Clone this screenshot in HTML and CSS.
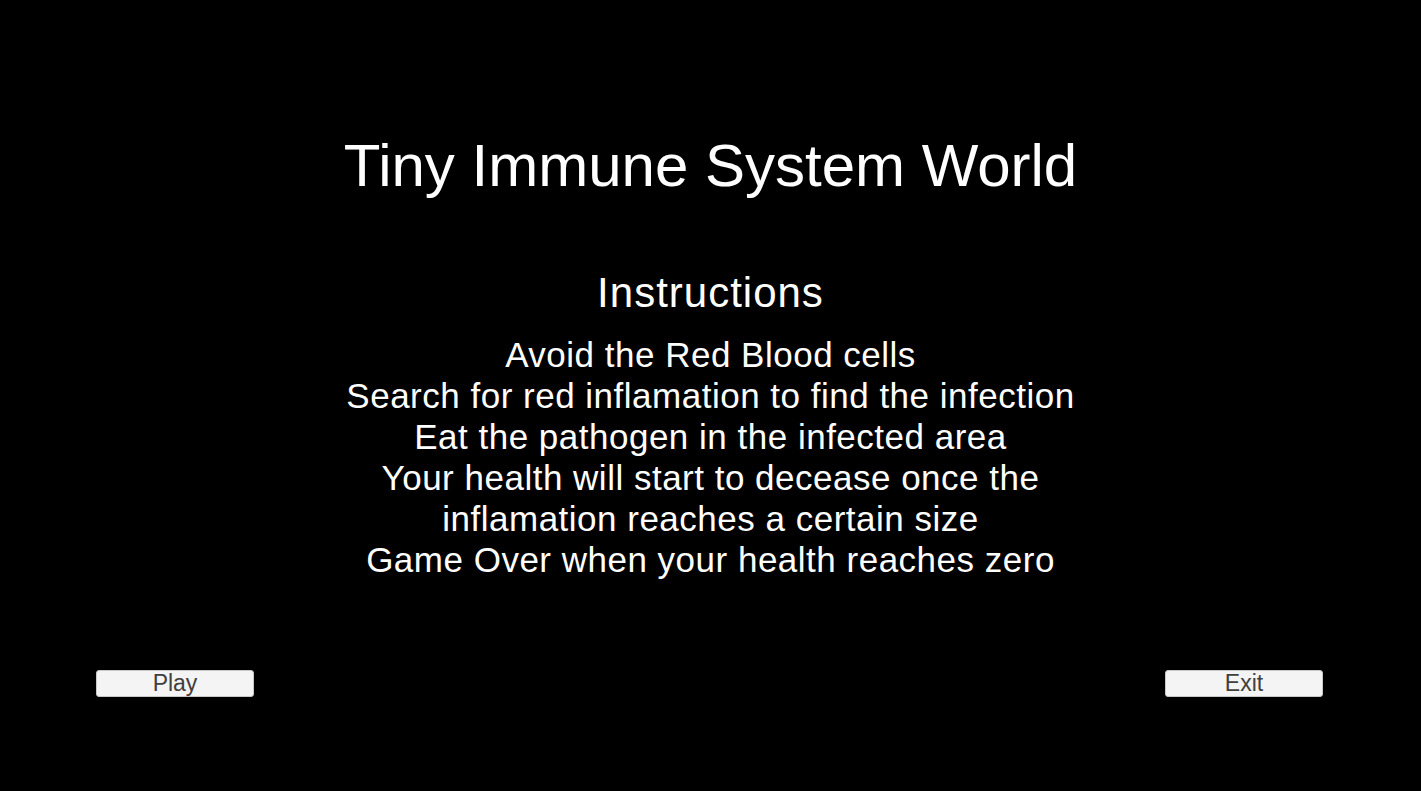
FILE: index.html
```html
<!DOCTYPE html>
<html lang="en">
<head>
  <meta charset="UTF-8" />
  <meta name="viewport" content="width=device-width, initial-scale=1.0"/>
  <title>Tiny Immune System World</title>
  <link rel="stylesheet" href="styles.css">
</head>
<body>
  <div class="menu">
    <h1 class="title">Tiny Immune System World</h1>

    <div class="instructions">
      <h2>Instructions</h2>
      <p class="rules">
        Avoid the Red Blood cells<br />
        Search for red inflamation to find the infection<br />
        Eat the pathogen in the infected area<br />
        Your health will start to decease once the<br />
        inflamation reaches a certain size<br />
        Game Over when your health reaches zero
      </p>
    </div>

    <div class="buttons">
      <button class="menu-button">Play</button>
      <button class="menu-button">Exit</button>
    </div>
  </div>
</body>
</html>
```

FILE: styles.css
```css
* {
  margin: 0;
  padding: 0;
  box-sizing: border-box;
}

body {
  background: #000;
  color: #fff;
  font-family: 'Liberation Sans', Arial, sans-serif;
  width: 100%;
  min-height: 100vh;
}

.menu {
  display: flex;
  flex-direction: column;
  align-items: center;
  padding-top: 133px;
}

.title {
  font-size: 60px;
  font-weight: normal;
  line-height: 66px;
}

.instructions {
  margin-top: 69px;
  text-align: center;
}

.instructions h2 {
  font-size: 42px;
  font-weight: normal;
  line-height: 50px;
  letter-spacing: 1px;
}

.rules {
  margin-top: 16px;
  font-size: 35px;
  line-height: 41px;
  letter-spacing: 0.5px;
}

.buttons {
  width: 100%;
  display: flex;
  justify-content: space-between;
  padding: 0 98px 0 96px;
  margin-top: 90px;
}

.menu-button {
  width: 158px;
  height: 27px;
  background: #f4f4f4;
  border: 1px solid #c8c8c8;
  border-radius: 3px;
  color: #404040;
  font-family: inherit;
  font-size: 23px;
  line-height: 25px;
}
```
